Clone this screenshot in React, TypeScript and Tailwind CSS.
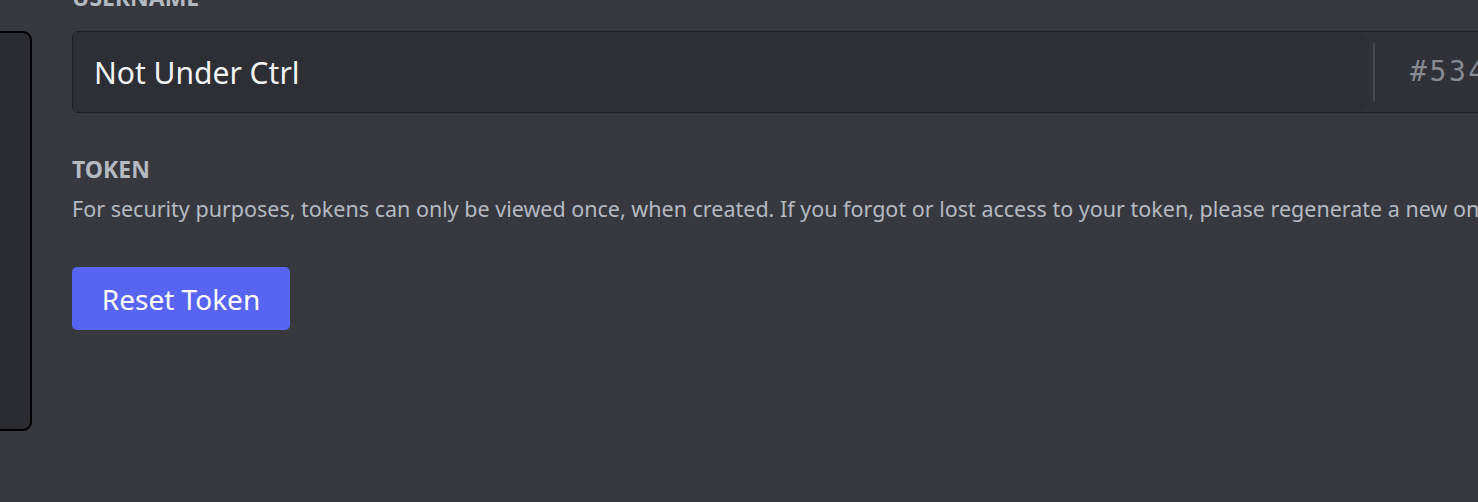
export default function App() {
  return (
    <div
      className="flex h-[502px] w-[1478px] overflow-hidden bg-[#38393f]"
      style={{ fontFamily: '"Noto Sans", "Open Sans", sans-serif' }}
    >
      {/* Left: clipped card */}
      <div className="mt-[31px] h-[400px] w-[32px] shrink-0 rounded-r-[9px] border-y-2 border-r-2 border-black bg-[#2b2c31]" />

      {/* Main: bot settings */}
      <div className="-mt-[17px] flex shrink-0 flex-col pl-[40px]">
        <label className="text-[23px] font-bold uppercase leading-[28px] text-[#b5bac1]">
          Username
        </label>
        <div className="mt-[20px] flex h-[82px] w-[1500px] items-center rounded-[6px] border border-[#1f2023] bg-[#313237]">
          <div className="flex h-full w-[1296px] items-center rounded-r-[10px] bg-[#2e2f34] pl-[21px] text-[30px] text-[#f2f3f5]">
            Not Under Ctrl
          </div>
          <div className="ml-[4px] h-[59px] w-[2px] bg-[#45474d]" />
          <span
            className="ml-[35px] text-[28px] tracking-[2.6px] text-[#878a91]"
            style={{ fontFamily: '"DejaVu Sans Mono", monospace' }}
          >
            #5348
          </span>
        </div>

        <label className="mt-[42px] text-[23px] font-bold uppercase leading-[28px] text-[#b5bac1]">
          Token
        </label>
        <p className="mt-[12px] whitespace-nowrap text-[21.5px] leading-[28px] text-[#b5bac1]">
          For security purposes, tokens can only be viewed once, when created. If you forgot or lost access to your token, please regenerate a new one.
        </p>

        <div className="mt-[44px]">
          <button className="h-[63px] w-[218px] rounded-[5px] bg-[#5865f2] text-[28px] text-white">
            Reset Token
          </button>
        </div>
      </div>
    </div>
  );
}
